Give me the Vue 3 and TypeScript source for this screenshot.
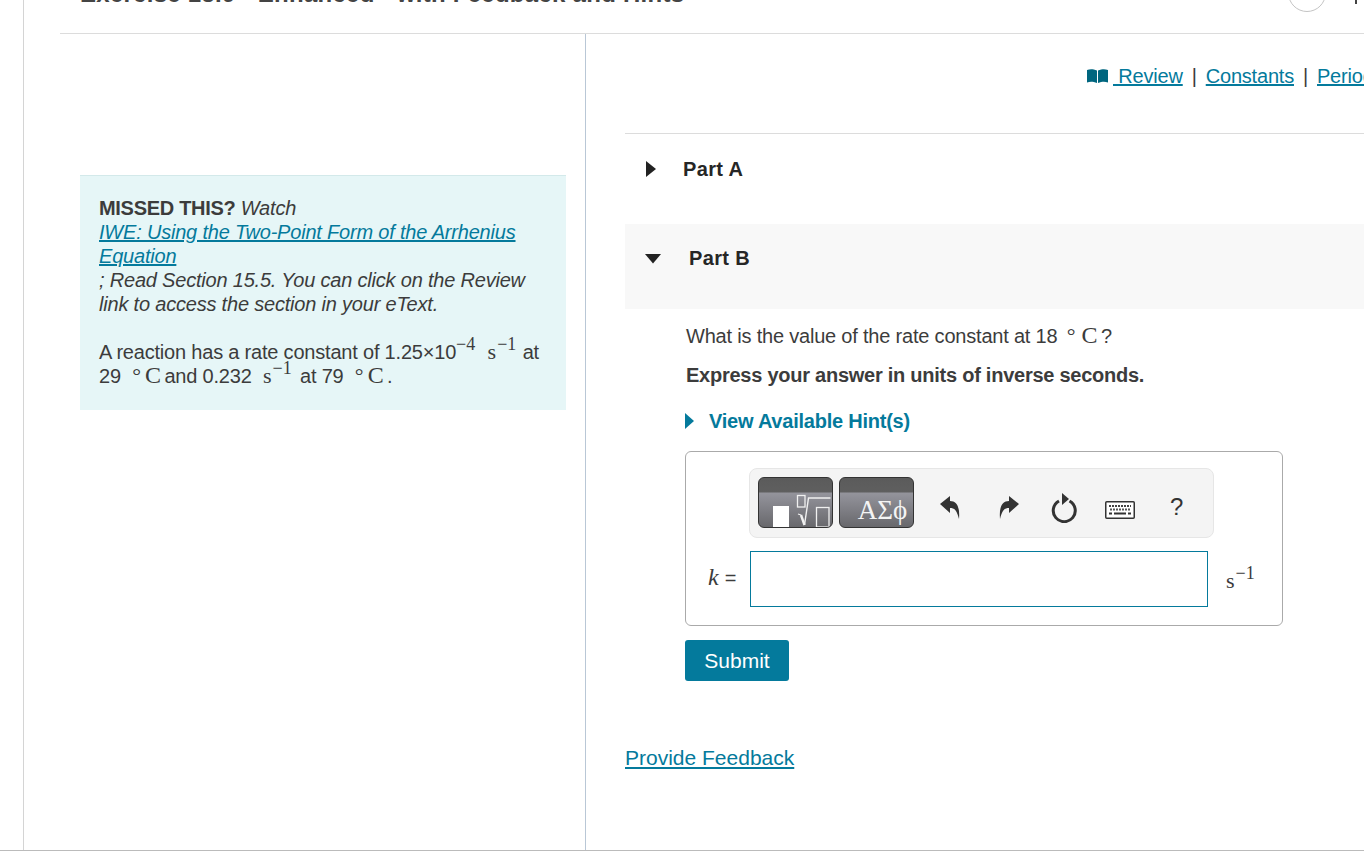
<script setup lang="ts">
const links = ['Constants', 'Periodic Table'];
</script>

<template>
  <div class="page">
    <div class="frame">
      <header class="top">
        <h1>Exercise 15.9 - Enhanced - with Feedback and Hints</h1>
        <div class="pager">
          <span class="round"></span>
          <span class="tick"></span>
        </div>
      </header>
      <div class="columns">
        <aside class="left">
          <div class="note">
            <p class="intro">
              <b>MISSED THIS?</b> <i>Watch</i><br />
              <a href="#"><i>IWE: Using the Two-Point Form of the Arrhenius Equation</i></a><br />
              <i>; Read Section 15.5. You can click on the Review link to access the section in your eText.</i>
            </p>
            <p>
              A reaction has a rate constant of 1.25×10<sup class="m">−4</sup> <span class="m s lead">s</span><sup class="m">−1</sup> at
              29 <span class="m deg">°</span><span class="m cel">C</span> and 0.232 <span class="m s lead">s</span><sup class="m wide">−1</sup> at 79 <span class="m deg">°</span><span class="m cel">C</span> .
            </p>
          </div>
        </aside>
        <main class="right">
          <nav class="links">
            <svg class="book" width="21" height="14" viewBox="0 0 21 14">
              <path d="M0 1 C3 0 6 0 10 1.5 V14 C6 12.5 3 12.5 0 13.5 Z M11 1.5 C15 0 18 0 21 1 V13.5 C18 12.5 15 12.5 11 14 Z" fill="#00667f" />
            </svg>
            <a href="#">&nbsp;Review</a>
            <template v-for="l in links" :key="l">
              <span class="sep">|</span>
              <a href="#">{{ l }}</a>
            </template>
          </nav>

          <div class="part part-a">
            <svg class="caret" width="10" height="16" viewBox="0 0 10 16"><path d="M0 0 L10 8 L0 16 Z" fill="#222" /></svg>
            <span>Part A</span>
          </div>
          <div class="part part-b">
            <svg class="caret" width="16" height="10" viewBox="0 0 16 10"><path d="M0 0 H16 L8 9.5 Z" fill="#222" /></svg>
            <span>Part B</span>
          </div>

          <div class="body">
            <p class="q">What is the value of the rate constant at 18 <span class="m deg near">°</span><span class="m cel">C</span> ?</p>
            <p class="ex">Express your answer in units of inverse seconds.</p>
            <a class="hint" href="#">
              <svg width="9" height="16" viewBox="0 0 9 16"><path d="M0 0 L9 8 L0 16 Z" fill="#047a9c" /></svg>
              <span>View Available Hint(s)</span>
            </a>

            <div class="answer">
              <div class="tools">
                <div class="tbtn">
                  <svg width="75" height="36" viewBox="0 0 75 36">
                    <rect x="15" y="14" width="16" height="22" fill="#fff" />
                    <g fill="none" stroke="#f0f0f0" stroke-width="1.3">
                      <rect x="39.5" y="3.5" width="7.5" height="11.5" />
                      <path d="M40 22 l3 1" stroke-width="1.2" />
                      <path d="M43 23 l3.5 10" stroke-width="2.4" />
                      <path d="M46.5 33 l4 -27 h22" stroke-width="1.4" />
                      <rect x="58.5" y="15.5" width="12.5" height="19.5" />
                    </g>
                  </svg>
                </div>
                <div class="tbtn">
                  <span class="greek">ΑΣϕ</span>
                </div>
                <button class="tool t-undo" aria-label="undo">
                  <svg width="22" height="26" viewBox="0 0 22 26"><path d="M1 9 L11 1 V6 C18 6 21 12 20 24 C18 16 16 13 11 13 V18 Z" fill="#333" /></svg>
                </button>
                <button class="tool t-redo" aria-label="redo">
                  <svg width="22" height="26" viewBox="0 0 22 26"><path d="M21 9 L11 1 V6 C4 6 1 12 2 24 C4 16 6 13 11 13 V18 Z" fill="#333" /></svg>
                </button>
                <button class="tool t-reset" aria-label="reset">
                  <svg width="26" height="30" viewBox="0 0 26 30">
                    <path d="M8 8 A11 11 0 1 0 18.5 8" fill="none" stroke="#333" stroke-width="3" />
                    <path d="M11 0 L18 6 L11 12 Z" fill="#333" />
                  </svg>
                </button>
                <button class="tool t-keys" aria-label="keyboard">
                  <svg width="30" height="18" viewBox="0 0 30 18">
                    <rect x=".75" y=".75" width="28.5" height="16.5" rx="1" fill="#fff" stroke="#333" stroke-width="1.5" />
                    <path d="M4 5 H26" stroke="#444" stroke-width="2" stroke-dasharray="2 1" />
                    <path d="M5 8.5 H25" stroke="#555" stroke-width="2" stroke-dasharray="2 1" />
                    <path d="M4 12.5 H7 M9 12.5 H21 M23 12.5 H26" stroke="#333" stroke-width="2" />
                  </svg>
                </button>
                <button class="tool t-help" aria-label="help">?</button>
              </div>
              <div class="row">
                <label><i class="m">k</i><span class="eq">=</span></label>
                <input type="text" />
                <span class="unit"><span class="m s">s</span><sup class="m">−1</sup></span>
              </div>
            </div>

            <button class="submit">Submit</button>
          </div>
          <a class="feedback" href="#">Provide Feedback</a>
        </main>
      </div>
    </div>
  </div>
</template>

<style>
html, body {
  margin: 0;
  background: #fff;
  overflow: hidden;
}
</style>

<style scoped>
.page {
  width: 1364px;
  height: 851px;
  overflow: hidden;
  box-sizing: border-box;
  border-bottom: 1px solid #bbb;
  font-family: "Liberation Sans", Arial, sans-serif;
  font-size: 20px;
  color: #3c3c3c;
}
.frame {
  margin-left: 23px;
  height: 100%;
  border-left: 1px solid #d4d4d4;
  padding-left: 36px;
}
.top {
  height: 34px;
  box-sizing: border-box;
  border-bottom: 1px solid #dcdcdc;
  display: flex;
  justify-content: space-between;
}
h1 {
  margin: -20px 0 0 20px;
  font-size: 24px;
  line-height: 28px;
  font-weight: 700;
  letter-spacing: 0.27px;
  color: #444;
  white-space: nowrap;
}
.pager {
  display: flex;
  align-items: flex-end;
  height: 12px;
}
.round {
  width: 38px;
  height: 38px;
  box-sizing: border-box;
  border: 1px solid #c4c4c4;
  border-radius: 50%;
  margin-top: -27px;
}
.tick {
  width: 2px;
  height: 4px;
  background: #444;
  margin: 0 7px 8px 29px;
}
.columns {
  display: flex;
  height: 816px;
}
.left {
  width: 526px;
  box-sizing: border-box;
  border-right: 1px solid #b9c7d6;
  padding: 141px 19px 0 20px;
}
.note {
  background: #e6f6f7;
  border-top: 1px solid #d3e9ea;
  padding: 20px 19px;
  height: 235px;
  box-sizing: border-box;
  line-height: 24px;
  width: 486px;
  letter-spacing: -0.2px;
}
.note p {
  margin: 0 0 24px;
}
.note p:last-child {
  margin: 0;
}
.intro b {
  letter-spacing: -0.3px;
}
a {
  color: #047a9c;
}
.m {
  font-family: "Liberation Serif", "Times New Roman", serif;
  letter-spacing: 0;
  line-height: 0;
}
.s {
  font-size: 22px;
  margin-right: 1px;
}
.lead {
  margin-left: 6px;
}
.deg {
  font-size: 22px;
  margin-left: 6px;
  margin-right: 4px;
}
.deg.near {
  margin-left: 4px;
  margin-right: 6px;
}
.cel {
  font-size: 24px;
  margin-right: -2px;
}
sup {
  font-size: 18px;
  line-height: 0;
  vertical-align: 9px;
  letter-spacing: 0.5px;
  margin-right: 1px;
}
sup.wide {
  margin-right: 3px;
}
.right {
  flex: 1;
  min-width: 0;
  padding-left: 39px;
  overflow: hidden;
}
.links {
  height: 100px;
  box-sizing: border-box;
  padding-top: 30px;
  line-height: 24px;
  white-space: nowrap;
  border-bottom: 1px solid #dcdcdc;
  padding-left: 462px;
  display: flex;
  width: 1000px;
  letter-spacing: -0.2px;
}
.links a {
  flex: none;
}
.book {
  margin: 5px 5px 0 0;
  flex: none;
}
.sep {
  margin: 0 9px;
}
.part {
  font-weight: 700;
  color: #262626;
  display: flex;
  align-items: center;
}
.part span {
  letter-spacing: 0.35px;
}
.part-a {
  height: 90px;
  padding: 0 0 20px 21px;
  box-sizing: border-box;
  gap: 27px;
}
.part-b {
  height: 85px;
  background: #f8f8f8;
  padding: 0 0 16px 20px;
  box-sizing: border-box;
  gap: 28px;
}
.body {
  padding-left: 61px;
}
.body p {
  margin: 0;
  line-height: 24px;
}
.q {
  padding-top: 15px;
  letter-spacing: -0.2px;
}
.ex {
  padding-top: 15px;
  font-weight: 700;
  letter-spacing: -0.25px;
}
.hint {
  margin: 22px 0 0 -1px;
  display: flex;
  align-items: center;
  gap: 15px;
  font-weight: 700;
  line-height: 24px;
  text-decoration: none;
  letter-spacing: -0.23px;
}
.answer {
  margin: 18px 0 0 -1px;
  width: 598px;
  height: 175px;
  box-sizing: border-box;
  border: 1px solid #aaa;
  border-radius: 6px;
  padding: 16px 0 0 63px;
}
.tools {
  width: 465px;
  height: 70px;
  box-sizing: border-box;
  background: #f4f4f4;
  border: 1px solid #e6e6e6;
  border-radius: 8px;
  display: flex;
  align-items: center;
  padding: 0 0 0 8px;
  gap: 6px;
}
.tbtn {
  width: 75px;
  height: 51px;
  margin-top: -2px;
  box-sizing: border-box;
  border: 1px solid #333;
  border-radius: 6px;
  background: linear-gradient(#5b5b5b 0, #5f5f5f 14px, #94949c 15px, #68686c 100%);
  display: flex;
  align-items: flex-end;
  justify-content: center;
  overflow: hidden;
  color: #f4f4f4;
}
.tbtn svg {
  flex: none;
  margin-bottom: -1px;
}
.greek {
  font-family: "Liberation Serif", serif;
  font-size: 27px;
  line-height: 33px;
  white-space: nowrap;
  padding-left: 12px;
}
.tool {
  border: 0;
  background: none;
  padding: 0;
  display: flex;
  align-items: center;
  justify-content: center;
  margin-top: 10px;
}
.t-undo { margin-left: 19px; }
.t-redo { margin-left: 31px; }
.t-reset { margin-left: 25px; }
.t-keys { margin-left: 22px; margin-top: 14px; }
.t-help {
  margin-left: 29px;
  font: 24px "Liberation Sans", sans-serif;
  color: #333;
  margin-top: 8px;
}
.row {
  display: flex;
  align-items: center;
  margin: 13px 0 0 -41px;
}
.row label {
  width: 42px;
  font-size: 18px;
  white-space: nowrap;
  margin-top: -1px;
}
.row label .m {
  font-size: 24px;
}
.eq {
  margin-left: 6px;
  font-size: 20px;
}
input {
  width: 458px;
  height: 56px;
  box-sizing: border-box;
  border: 1px solid #047a9c;
  background: #fff;
  outline: 0;
  margin: 0;
}
.unit {
  margin: 4px 0 0 18px;
  white-space: nowrap;
}
.submit {
  display: block;
  margin: 14px 0 0 -1px;
  width: 104px;
  height: 41px;
  background: #047a9c;
  border: 0;
  border-radius: 3px;
  color: #fff;
  font: 21px "Liberation Sans", sans-serif;
  padding: 0;
}
.feedback {
  display: inline-block;
  margin-top: 65px;
  line-height: 24px;
  font-size: 21px;
}
</style>
